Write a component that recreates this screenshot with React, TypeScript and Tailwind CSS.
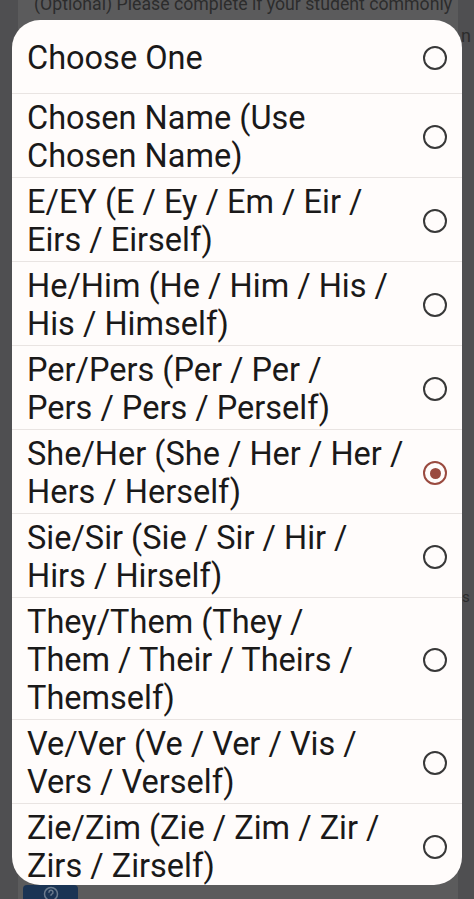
import React from "react";

// each option is kept as the lines it wraps into on the device
const options: string[][] = [
  ["Choose One"],
  ["Chosen Name (Use", "Chosen Name)"],
  ["E/EY (E / Ey / Em / Eir /", "Eirs / Eirself)"],
  ["He/Him (He / Him / His /", "His / Himself)"],
  ["Per/Pers (Per / Per /", "Pers / Pers / Perself)"],
  ["She/Her (She / Her / Her /", "Hers / Herself)"],
  ["Sie/Sir (Sie / Sir / Hir /", "Hirs / Hirself)"],
  ["They/Them (They /", "Them / Their / Theirs /", "Themself)"],
  ["Ve/Ver (Ve / Ver / Vis /", "Vers / Verself)"],
  ["Zie/Zim (Zie / Zim / Zir /", "Zirs / Zirself)"],
];

function Radio({ checked }: { checked: boolean }) {
  if (checked) {
    return (
      <span className="flex h-[24px] w-[24px] shrink-0 items-center justify-center rounded-full border-[2.5px] border-[#9a4a3f]">
        <span className="h-[11px] w-[11px] rounded-full bg-[#9a4a3f]" />
      </span>
    );
  }
  return <span className="h-[24px] w-[24px] shrink-0 rounded-full border-[2.5px] border-[#383838]" />;
}

export default function App() {
  const selected = 5;

  return (
    <div
      className="relative h-[899px] w-[474px] overflow-hidden bg-[#4f4f51]"
      style={{ fontFamily: "Roboto, 'Noto Sans', sans-serif" }}
    >
      {/* page behind the dim */}
      <div className="ml-[18px] flex h-full w-[440px] flex-col bg-[#5b5b5c]">
        <p className="-mt-[8px] whitespace-nowrap pl-[16px] text-[17.7px] leading-[24px] text-[#2c2c2c]">
          (Optional) Please complete if your student commonly
        </p>
        <div className="mt-auto ml-[5px] flex h-[14px] w-[55px] justify-center rounded-t-[4px] bg-[#1b3454] pt-[1px]">
          <svg width="16" height="16" viewBox="0 0 16 16" fill="none" stroke="#6b7b8e" strokeWidth="1.5">
            <circle cx="8" cy="8" r="6.5" />
            <path d="M6 6.3a2 2 0 1 1 2.8 1.8c-.5.3-.8.6-.8 1.2" strokeLinecap="round" />
          </svg>
        </div>
      </div>
      <span className="absolute left-[461px] top-[22px] text-[18px] text-[#2c2c2c]">n</span>
      <span className="absolute left-[462px] top-[586px] text-[15px] text-[#2c2c2c]">s</span>

      {/* dialog */}
      <div className="absolute left-[12px] top-[20px] h-[865px] w-[450px] overflow-hidden rounded-[28px] bg-[#fffcfb]">
        {options.map((lines, i) => (
          <div
            key={i}
            className={`flex items-center justify-between pl-[15px] pr-[15px] ${
              i === 0 ? "h-[74px] pt-[3px]" : "pt-[5px] pb-[2px]"
            } ${i < options.length - 1 ? "border-b border-[#e9e4e2]" : ""}`}
          >
            <span className="text-[32.5px] leading-[38px] text-[#1a1919]">
              {lines.map((l) => (
                <span key={l} className="block whitespace-nowrap">
                  {l}
                </span>
              ))}
            </span>
            <Radio checked={i === selected} />
          </div>
        ))}
      </div>
    </div>
  );
}
